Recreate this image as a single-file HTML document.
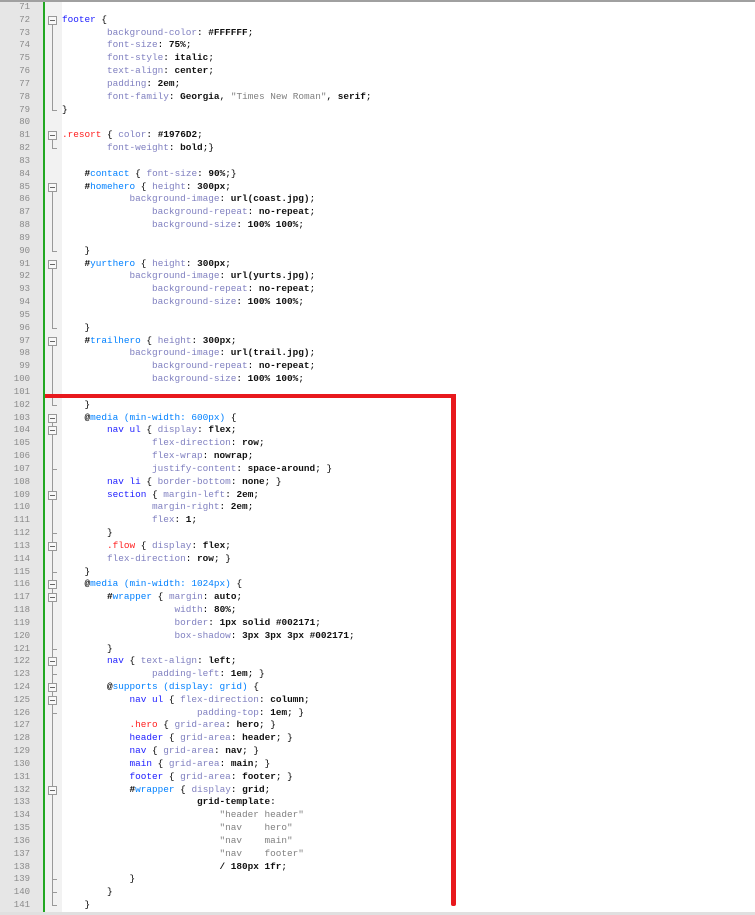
<!DOCTYPE html>
<html><head><meta charset="utf-8"><style>
body{margin:0;width:755px;height:915px;overflow:hidden;background:#fff;position:relative;font-family:"Liberation Mono",monospace;font-size:9.4px}
#g{position:absolute;left:0;top:0;width:43px;height:915px;background:#e6e6e6}
#gr{position:absolute;left:43px;top:0;width:2px;height:913px;background:#22a822}
#fm{position:absolute;left:45px;top:0;width:17px;height:913px;background:#f2f2f2}
#top{position:absolute;left:0;top:0;width:755px;height:2px;background:#a0a0a0}
#bot{position:absolute;left:0;top:912px;width:755px;height:3px;background:#e0e0e0}
.n{position:absolute;left:0;width:30px;text-align:right;color:#8a8a8a;font-size:9px;line-height:12.83px}
.l{position:absolute;left:62px;white-space:pre;line-height:12.83px;color:#000}
.s{color:#2020ff}.p{color:#8080c0}.v{font-weight:bold;color:#111}.st{color:#808080}.id{color:#0080ff}.c{color:#ff2020}.h{font-weight:bold}
.fb{position:absolute;left:48px;width:9px;height:9px;border:1px solid #999;background:#f8f8f8;box-sizing:border-box;z-index:2}
.fb:after{content:"";position:absolute;left:1px;top:3px;width:5px;height:1px;background:#666}
.vl{position:absolute;left:52px;width:1px;background:#999}
.tk{position:absolute;left:52px;width:5px;height:1px;background:#999}
.red{position:absolute;background:#e8191d}
</style></head><body>
<div id="g"></div><div id="gr"></div><div id="fm"></div><div id="top"></div><div id="bot"></div>
<div id="c"></div>
<div class="red" style="left:45px;top:394px;width:411px;height:4px"></div>
<div class="red" style="left:451px;top:394px;width:5px;height:512px;border-radius:0 0 2px 2px"></div>
<script>
const L=[
"",
'<span class="s">footer</span> {',
'        <span class="p">background-color</span>: <span class="v">#FFFFFF</span>;',
'        <span class="p">font-size</span>: <span class="v">75%</span>;',
'        <span class="p">font-style</span>: <span class="v">italic</span>;',
'        <span class="p">text-align</span>: <span class="v">center</span>;',
'        <span class="p">padding</span>: <span class="v">2em</span>;',
'        <span class="p">font-family</span>: <span class="v">Georgia</span>, <span class="st">"Times New Roman"</span>, <span class="v">serif</span>;',
'}',
'',
'<span class="c">.resort</span> { <span class="p">color</span>: <span class="v">#1976D2</span>;',
'        <span class="p">font-weight</span>: <span class="v">bold</span>;}',
'',
'    <span class="h">#</span><span class="id">contact</span> { <span class="p">font-size</span>: <span class="v">90%</span>;}',
'    <span class="h">#</span><span class="id">homehero</span> { <span class="p">height</span>: <span class="v">300px</span>;',
'            <span class="p">background-image</span>: <span class="v">url(coast.jpg)</span>;',
'                <span class="p">background-repeat</span>: <span class="v">no-repeat</span>;',
'                <span class="p">background-size</span>: <span class="v">100% 100%</span>;',
'',
'    }',
'    <span class="h">#</span><span class="id">yurthero</span> { <span class="p">height</span>: <span class="v">300px</span>;',
'            <span class="p">background-image</span>: <span class="v">url(yurts.jpg)</span>;',
'                <span class="p">background-repeat</span>: <span class="v">no-repeat</span>;',
'                <span class="p">background-size</span>: <span class="v">100% 100%</span>;',
'',
'    }',
'    <span class="h">#</span><span class="id">trailhero</span> { <span class="p">height</span>: <span class="v">300px</span>;',
'            <span class="p">background-image</span>: <span class="v">url(trail.jpg)</span>;',
'                <span class="p">background-repeat</span>: <span class="v">no-repeat</span>;',
'                <span class="p">background-size</span>: <span class="v">100% 100%</span>;',
'',
'    }',
'    <span class="id"><b style="color:#000">@</b>media (min-width: 600px)</span> {',
'        <span class="s">nav ul</span> { <span class="p">display</span>: <span class="v">flex</span>;',
'                <span class="p">flex-direction</span>: <span class="v">row</span>;',
'                <span class="p">flex-wrap</span>: <span class="v">nowrap</span>;',
'                <span class="p">justify-content</span>: <span class="v">space-around</span>; }',
'        <span class="s">nav li</span> { <span class="p">border-bottom</span>: <span class="v">none</span>; }',
'        <span class="s">section</span> { <span class="p">margin-left</span>: <span class="v">2em</span>;',
'                <span class="p">margin-right</span>: <span class="v">2em</span>;',
'                <span class="p">flex</span>: <span class="v">1</span>;',
'        }',
'        <span class="c">.flow</span> { <span class="p">display</span>: <span class="v">flex</span>;',
'        <span class="p">flex-direction</span>: <span class="v">row</span>; }',
'    }',
'    <span class="id"><b style="color:#000">@</b>media (min-width: 1024px)</span> {',
'        <span class="h">#</span><span class="id">wrapper</span> { <span class="p">margin</span>: <span class="v">auto</span>;',
'                    <span class="p">width</span>: <span class="v">80%</span>;',
'                    <span class="p">border</span>: <span class="v">1px solid #002171</span>;',
'                    <span class="p">box-shadow</span>: <span class="v">3px 3px 3px #002171</span>;',
'        }',
'        <span class="s">nav</span> { <span class="p">text-align</span>: <span class="v">left</span>;',
'                <span class="p">padding-left</span>: <span class="v">1em</span>; }',
'        <span class="id"><b style="color:#000">@</b>supports (display: grid)</span> {',
'            <span class="s">nav ul</span> { <span class="p">flex-direction</span>: <span class="v">column</span>;',
'                        <span class="p">padding-top</span>: <span class="v">1em</span>; }',
'            <span class="c">.hero</span> { <span class="p">grid-area</span>: <span class="v">hero</span>; }',
'            <span class="s">header</span> { <span class="p">grid-area</span>: <span class="v">header</span>; }',
'            <span class="s">nav</span> { <span class="p">grid-area</span>: <span class="v">nav</span>; }',
'            <span class="s">main</span> { <span class="p">grid-area</span>: <span class="v">main</span>; }',
'            <span class="s">footer</span> { <span class="p">grid-area</span>: <span class="v">footer</span>; }',
'            <span class="h">#</span><span class="id">wrapper</span> { <span class="p">display</span>: <span class="v">grid</span>;',
'                        <span class="v">grid-template</span>:',
'                            <span class="st">"header header"</span>',
'                            <span class="st">"nav    hero"</span>',
'                            <span class="st">"nav    main"</span>',
'                            <span class="st">"nav    footer"</span>',
'                            <span class="v">/ 180px 1fr</span>;',
'            }',
'        }',
'    }'];
const folds=[72,81,85,91,97,103,104,109,113,116,117,122,124,125,132];
const T=n=>1+(n-71)*12.83;
let h='';
for(let i=0;i<L.length;i++){const n=71+i,t=T(n);
h+=`<div class="n" style="top:${t}px">${n}</div><div class="l" style="top:${t}px">${L[i]}</div>`;
if(folds.includes(n))h+=`<div class="fb" style="top:${t+2}px"></div>`;}
const segs=[[72,79],[81,82],[85,90],[91,96],[97,102],[103,141]];
for(const [a,b] of segs){const y1=T(a)+7,y2=T(b)+6;h+=`<div class="vl" style="top:${y1}px;height:${y2-y1}px"></div><div class="tk" style="top:${y2}px"></div>`;}
for(const n of [107,112,115,121,123,126,139,140])h+=`<div class="tk" style="top:${T(n)+6}px"></div>`;
document.getElementById('c').innerHTML=h;
</script>
</body></html>
